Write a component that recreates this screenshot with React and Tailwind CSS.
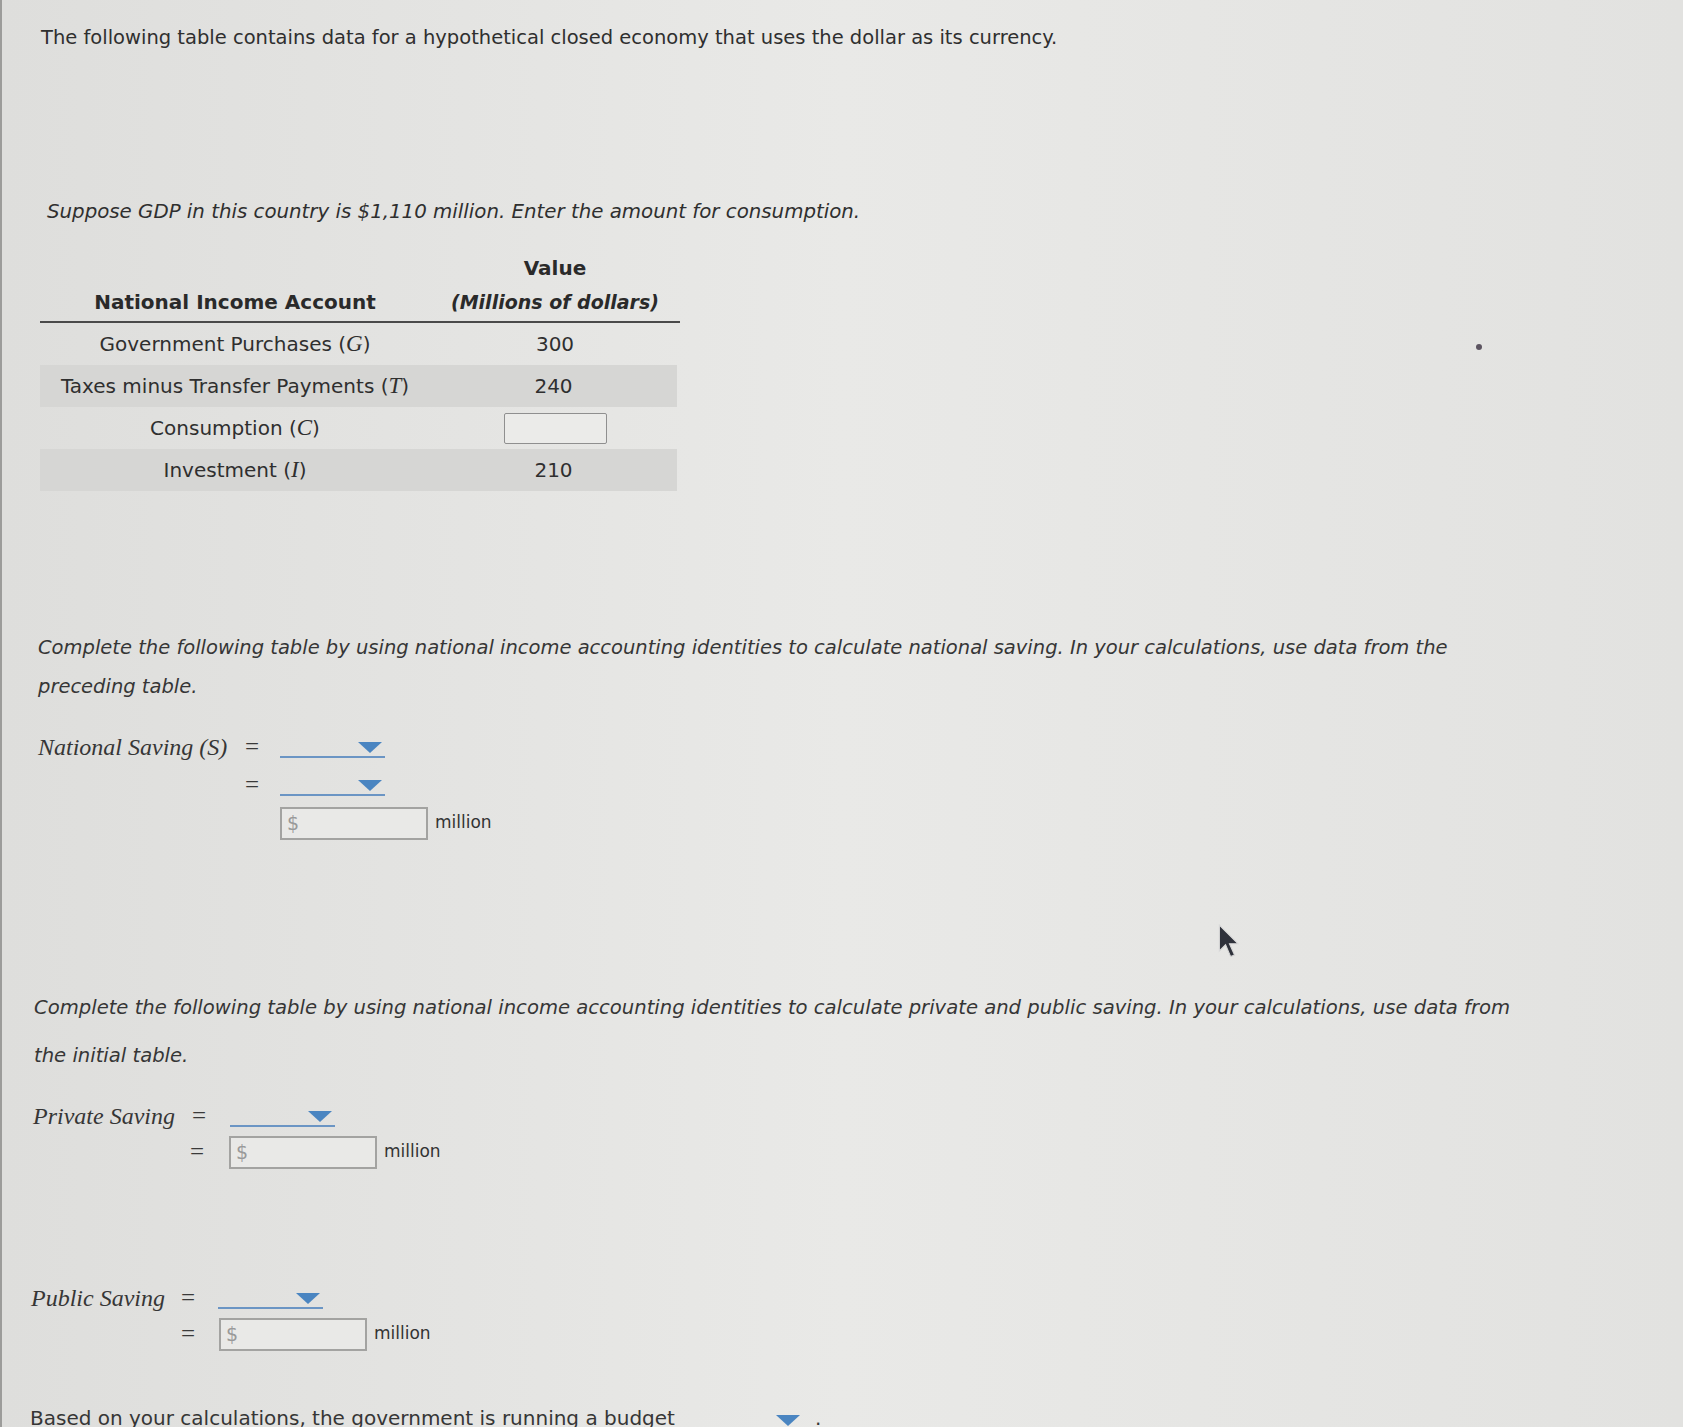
import React from "react";

const SANS = "font-['DejaVu_Sans','Verdana',sans-serif]";
const SERIF = "font-['Liberation_Serif','Times_New_Roman',serif]";

function M({ children }) {
  return <span className={`${SERIF} italic text-[23px]`}>{children}</span>;
}

function Drop() {
  return (
    <div className="flex items-end justify-end w-[105px] h-[22px] border-b-2 border-[#6b95c4] pr-[3px] pb-[3px]">
      <div className="w-0 h-0 border-l-[12px] border-r-[12px] border-t-[11px] border-l-transparent border-r-transparent border-t-[#4a85c1]" />
    </div>
  );
}

function Money() {
  return (
    <div className="flex items-center">
      <div className="flex items-center w-[148px] h-[33px] border-2 border-[#a3a3a1] bg-[#e9e9e7] pl-[5px]">
        <span className={`${SANS} text-[19px] text-[#999999]`}>$</span>
      </div>
      <span className={`${SANS} ml-[7px] text-[17px] text-[#333333]`}>million</span>
    </div>
  );
}

function Eq() {
  return <div className={`${SERIF} w-[28px] text-center text-[25px] text-[#3a3a3a]`}>=</div>;
}

export default function App() {
  return (
    <div className={`relative w-[1683px] h-[1427px] overflow-hidden border-l-2 border-[#9c9c9a] bg-linear-to-r from-[#dededc] via-[#e9e9e7] to-[#e2e2e0] text-[#2f2f2f] ${SANS}`}>
      <p className="mt-[25px] ml-[39px] text-[19.5px] leading-[26px]">
        The following table contains data for a hypothetical closed economy that uses the dollar as its currency.
      </p>

      <p className="mt-[148px] ml-[45px] text-[19.8px] leading-[26px] italic">
        Suppose GDP in this country is $1,110 million. Enter the amount for consumption.
      </p>

      {/* Table */}
      <div className="mt-[26px] ml-[38px] w-[640px] text-[20px]">
        <div className="flex items-end border-b-2 border-[#4a4a4a] pb-[2px] font-bold text-[#2a2a2a]">
          <div className="w-[390px] text-center leading-[34px]">National Income Account</div>
          <div className="flex-1 text-center leading-[34px]">
            <div>Value</div>
            <div className="italic text-[19px]">(Millions of dollars)</div>
          </div>
        </div>
        <div className="flex items-center h-[42px]">
          <div className="w-[390px] text-center">Government Purchases (<M>G</M>)</div>
          <div className="flex-1 text-center">300</div>
        </div>
        <div className="flex items-center h-[42px] bg-[#d6d6d4] w-[637px]">
          <div className="w-[390px] text-center">Taxes minus Transfer Payments (<M>T</M>)</div>
          <div className="flex-1 text-center">240</div>
        </div>
        <div className="flex items-center h-[42px]">
          <div className="w-[390px] text-center">Consumption (<M>C</M>)</div>
          <div className="flex-1 flex justify-center">
            <div className="w-[103px] h-[31px] border-[1.5px] border-[#8f8f8f] rounded-[2px] bg-[#ebebe9]" />
          </div>
        </div>
        <div className="flex items-center h-[42px] bg-[#d6d6d4] w-[637px]">
          <div className="w-[390px] text-center">Investment (<M>I</M>)</div>
          <div className="flex-1 text-center">210</div>
        </div>
      </div>

      <p className="mt-[137px] ml-[36px] text-[19.5px] leading-[39px] italic text-[#363636]">
        Complete the following table by using national income accounting identities to calculate national saving. In your calculations, use data from the
        <br />
        preceding table.
      </p>

      {/* National saving */}
      <div className="mt-[22px] ml-[36px]">
        <div className="flex items-center h-[38px]">
          <div className={`${SERIF} italic w-[200px] text-[24px] text-[#363636]`}>National Saving (S)</div>
          <Eq />
          <div className="ml-[14px]"><Drop /></div>
        </div>
        <div className="flex items-center h-[38px]">
          <div className="w-[200px]" />
          <Eq />
          <div className="ml-[14px]"><Drop /></div>
        </div>
        <div className="flex items-center h-[38px]">
          <div className="w-[242px]" />
          <Money />
        </div>
      </div>

      <p className="mt-[142px] ml-[32px] text-[19.6px] leading-[48px] italic text-[#363636]">
        Complete the following table by using national income accounting identities to calculate private and public saving. In your calculations, use data from
        <br />
        the initial table.
      </p>

      {/* Private saving */}
      <div className="mt-[18px] ml-[31px]">
        <div className="flex items-center h-[36px]">
          <div className={`${SERIF} italic w-[152px] text-[24px] text-[#363636]`}>Private Saving</div>
          <Eq />
          <div className="ml-[17px]"><Drop /></div>
        </div>
        <div className="flex items-center h-[36px]">
          <div className="w-[150px]" />
          <Eq />
          <div className="ml-[18px]"><Money /></div>
        </div>
      </div>

      {/* Public saving */}
      <div className="mt-[110px] ml-[29px]">
        <div className="flex items-center h-[36px]">
          <div className={`${SERIF} italic w-[143px] text-[24px] text-[#363636]`}>Public Saving</div>
          <Eq />
          <div className="ml-[16px]"><Drop /></div>
        </div>
        <div className="flex items-center h-[36px]">
          <div className="w-[143px]" />
          <Eq />
          <div className="ml-[17px]"><Money /></div>
        </div>
      </div>

      <div className="mt-[52px] ml-[28px] flex items-center text-[20px] leading-[28px] text-[#363636]">
        <span>Based on your calculations, the government is running a budget</span>
        <div className="ml-[10px] flex items-end justify-end w-[118px] h-[22px] pr-[3px] pb-[3px]">
          <div className="w-0 h-0 border-l-[12px] border-r-[12px] border-t-[11px] border-l-transparent border-r-transparent border-t-[#4a85c1]" />
        </div>
        <span className="ml-[12px]">.</span>
      </div>

      {/* mouse cursor */}
      <svg className="absolute left-[1216px] top-[924px]" width="23" height="36" viewBox="0 0 20 32">
        <path d="M1 1 L1 24 L6.5 18.5 L11 29 L14.5 27.5 L10 17.5 L17.5 17.5 Z" fill="#2f323b" stroke="#d8d8d8" strokeWidth="1" />
      </svg>
      {/* dust speck */}
      <div className="absolute left-[1474px] top-[344px] w-[6px] h-[6px] rounded-full bg-[#5c5460]" />
    </div>
  );
}
